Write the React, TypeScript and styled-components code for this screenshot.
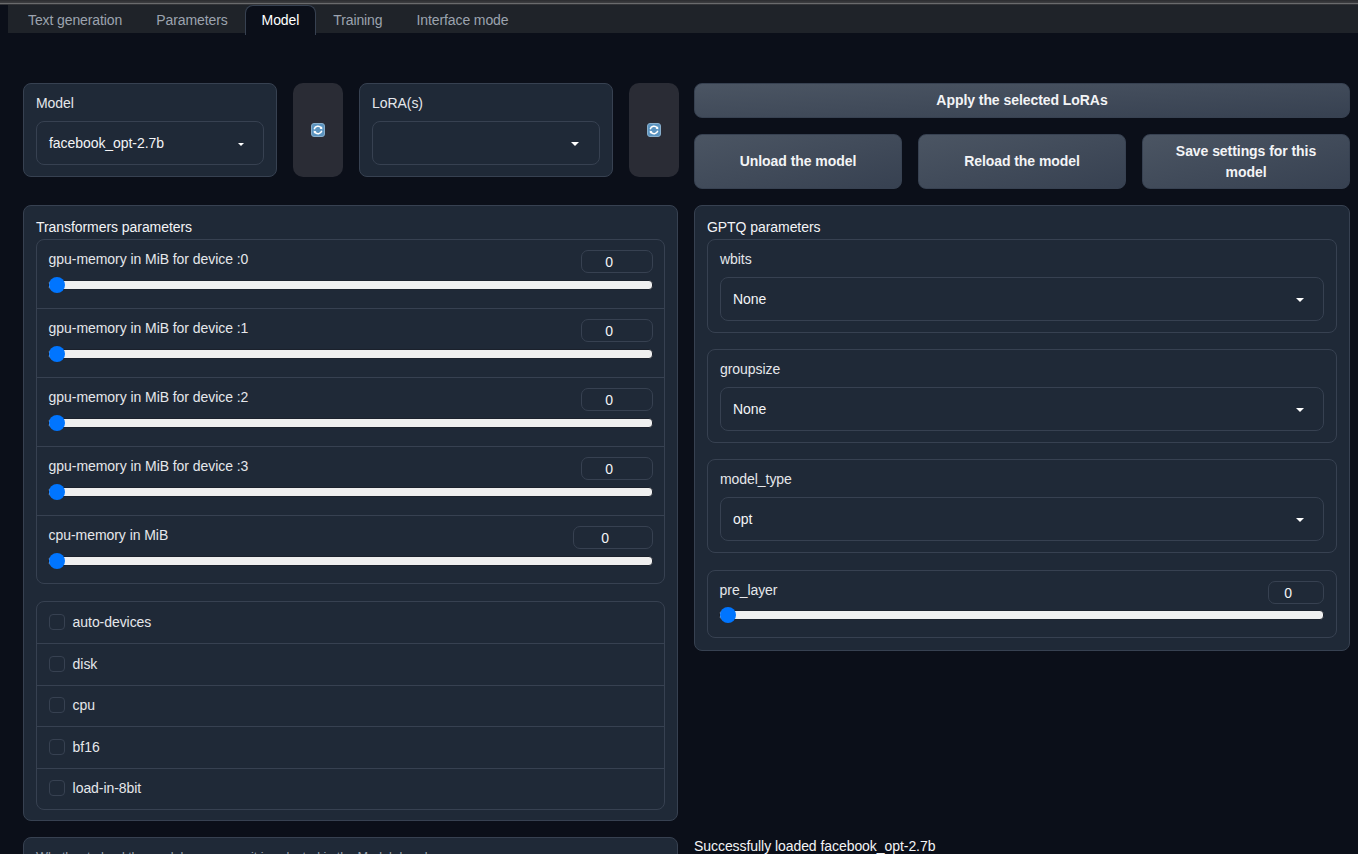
import React from "react";
import styled, { createGlobalStyle } from "styled-components";

const Global = createGlobalStyle`
  html, body { margin: 0; padding: 0; height: 854px; overflow: hidden; background: #0b0f19; }
  body { font-family: "Liberation Sans", Arial, sans-serif; font-size: 14px; color: #e5e7eb; letter-spacing: -0.06px; }
  * { box-sizing: border-box; }
`;

const Page = styled.div`display: flex; flex-direction: column; height: 854px; overflow: hidden;`;
const TopStrip = styled.div`height: 5px; flex: none; background: linear-gradient(#2b2c30 0, #3a3b3e 50%, #6a6b6d 70%, #16181d 100%);`;
const TabBar = styled.div`
  height: 28px; flex: none; margin-left: 8px; background: #1f2329; display: flex; padding-left: 3px;
`;
const Tab = styled.div<{ $active?: boolean }>`
  height: ${p => (p.$active ? "30px" : "28px")};
  padding: ${p => (p.$active ? "0 16px 1px" : "1px 16px 0")}; display: flex; align-items: center; font-size: 14px; letter-spacing: -0.1px;
  color: ${p => (p.$active ? "#fff" : "#9ca3af")};
  background: ${p => (p.$active ? "#0b0f19" : "transparent")};
  border: 1px solid ${p => (p.$active ? "#374151" : "transparent")};
  border-bottom: none; border-radius: 8px 8px 0 0;
  position: relative;
`;
const Content = styled.div`
  flex: 1; padding: 50px 8px 0 23px; display: grid;
  grid-template-columns: 655px 656px; column-gap: 16px; align-content: start; row-gap: 16px;
`;
const TopLeft = styled.div`
  display: grid; grid-template-columns: 254px 50px 254px 50px; grid-template-rows: 94px; column-gap: 16px; height: 94px;
`;
const Block = styled.div`
  background: #1f2937; border: 1px solid #374151; border-radius: 8px; padding: 12px;
`;
const PickerBlock = styled(Block)`padding-top: 11px;`;
const Label = styled.div`color: #e5e7eb; line-height: 16px; font-size: 14px;`;
const BlockTitle = styled(Label)`color: #f3f4f6; margin-top: 1px; margin-bottom: 4px;`;
const Select = styled.div<{ $small?: boolean }>`
  margin-top: 10px; height: 44px; background: #1f2937; border: 1px solid #374151; border-radius: 8px;
  display: flex; align-items: center; justify-content: space-between; padding: 0 ${p => (p.$small ? "19px" : "20px")} 0 12px;
  color: #f3f4f6; font-size: 14px;
`;
const Caret = styled.span<{ $small?: boolean }>`
  width: 0; height: 0; border-style: solid;
  border-width: ${p => (p.$small ? "3px 3px 0 3px" : "4px 4px 0 4px")};
  border-color: #fff transparent transparent transparent;
  margin-top: 2px;
`;
const RefreshBtn = styled.div`
  background: #2a2c35; border-radius: 10px; display: flex; align-items: center; justify-content: center; padding-bottom: 1px;
`;
const Buttons = styled.div`display: flex; flex-direction: column; gap: 16px;`;
const Btn = styled.div`
  flex: 1; min-width: 0; border: 1px solid #374151; border-radius: 8px;
  background: linear-gradient(to bottom right, #4b5563, #374151);
  display: flex; align-items: center; justify-content: center; text-align: center;
  color: #f3f4f6; font-weight: 700; font-size: 14px; line-height: 21px; padding: 0 28px;
`;
const WideBtn = styled(Btn)`flex: none; height: 35px;`;
const BtnRow = styled.div`display: grid; grid-template-columns: repeat(3, 208px); column-gap: 16px; height: 55px;`;
const Group = styled.div<{ $mt?: number }>`
  border: 1px solid #374151; border-radius: 8px; overflow: hidden; margin-top: ${p => p.$mt ?? 0}px;
`;
const SliderRow = styled.div`
  height: 69px; padding: 10px 11px 0 12px; border-top: 1px solid #374151;
  &:first-child { border-top: none; height: 68px; }
  &:last-child { height: 68px; }
`;
const SliderHead = styled.div`display: flex; justify-content: space-between; align-items: flex-start; height: 24px;`;
const RowLabel = styled(Label)`padding-top: 1px; margin-left: -0.4px;`;
const NumberBox = styled.div<{ $w: number }>`
  width: ${p => p.$w}px; height: 23px; border: 1px solid #374151; border-radius: 7px; padding-right: 16px;
  display: flex; align-items: center; justify-content: center; color: #f3f4f6; font-size: 14px;
`;
const Range = styled.input`
  -webkit-appearance: none; appearance: none; display: block; width: calc(100% + 1px); height: 16px; margin: 3px 0 0 -1px; background: transparent;
  &::-webkit-slider-runnable-track {
    height: 10px; background: #efefef; border-radius: 4px; border: 1px solid #1b212c;
  }
  &::-webkit-slider-thumb {
    -webkit-appearance: none; width: 16px; height: 16px; border-radius: 50%; background: #0075ff; margin-top: -4px;
  }
`;
const CheckList = styled(Group)`margin-top: 17px;`;
const CheckRow = styled.div`
  height: 41.4px; display: flex; align-items: center; padding: 0 0 1px 12px; gap: 8px; border-top: 1px solid #374151;
  &:first-child { border-top: none; }
`;
const CheckBox = styled.span`
  width: 16px; height: 16px; border: 1px solid #374151; border-radius: 4px; background: #1f2937; flex: none; margin-left: -0.4px;
`;
const CheckLabel = styled.span`color: #e5e7eb; font-size: 14px;`;
const SelectGroup = styled(Group)`padding: 11px 12px 12px; height: 94px; margin-bottom: 16px;`;
const PreLayer = styled(Group)`height: 68px; margin-top: 17px; padding: 10px 12px 0;`;
const PreLayerRange = styled(Range)`margin-top: 2px;`;
const Status = styled.div`color: #f3f4f6; font-size: 14px; line-height: 20px; margin-top: -1px;`;
const Hint = styled(Block)`height: 60px; padding: 11px 12px; color: #9ca3af; font-size: 12.7px; line-height: 16px;`;
const Transformers = styled(Block)`height: 616px;`;
const Gptq = styled(Block)`height: 446px;`;
const GptqInner = styled.div`display: flex; flex-direction: column;`;
const SelectStack = styled.div`display: flex; flex-direction: column; & > :last-child { margin-bottom: 0; }`;
const RightCol = styled.div``;

const RefreshIcon = () => (
  <svg width="14" height="14" viewBox="0 0 14 14" aria-hidden="true">
    <rect x="0.5" y="0.5" width="13" height="13" rx="2.5" fill="#5a93bf" stroke="#88aecb" strokeWidth="1" />
    <g fill="none" stroke="#fff" strokeWidth="1.5">
      <path d="M3.2 6.2 A3.9 3.9 0 0 1 10.2 5" />
      <path d="M10.8 7.8 A3.9 3.9 0 0 1 3.8 9" />
    </g>
    <path d="M8.6 5.7 L11.4 6.2 L11 3.3 Z" fill="#fff" />
    <path d="M5.4 8.3 L2.6 7.8 L3 10.7 Z" fill="#fff" />
  </svg>
);

const sliders: [string, number][] = [
  ["gpu-memory in MiB for device :0", 72],
  ["gpu-memory in MiB for device :1", 72],
  ["gpu-memory in MiB for device :2", 72],
  ["gpu-memory in MiB for device :3", 72],
  ["cpu-memory in MiB", 80],
];
const checks = ["auto-devices", "disk", "cpu", "bf16", "load-in-8bit"];
const selects: [string, string][] = [["wbits", "None"], ["groupsize", "None"], ["model_type", "opt"]];

export default function App() {
  return (
    <Page>
      <Global />
      <TopStrip />
      <TabBar>
        <Tab>Text generation</Tab>
        <Tab>Parameters</Tab>
        <Tab $active>Model</Tab>
        <Tab>Training</Tab>
        <Tab>Interface mode</Tab>
      </TabBar>
      <Content>
        <TopLeft>
          <PickerBlock>
            <Label>Model</Label>
            <Select $small>facebook_opt-2.7b<Caret $small /></Select>
          </PickerBlock>
          <RefreshBtn><RefreshIcon /></RefreshBtn>
          <PickerBlock>
            <Label>LoRA(s)</Label>
            <Select><span /><Caret /></Select>
          </PickerBlock>
          <RefreshBtn><RefreshIcon /></RefreshBtn>
        </TopLeft>
        <Buttons>
          <WideBtn>Apply the selected LoRAs</WideBtn>
          <BtnRow>
            <Btn>Unload the model</Btn>
            <Btn>Reload the model</Btn>
            <Btn>Save settings for this model</Btn>
          </BtnRow>
        </Buttons>
        <Transformers>
          <BlockTitle>Transformers parameters</BlockTitle>
          <Group>
            {sliders.map(([label, w]) => (
              <SliderRow key={label}>
                <SliderHead>
                  <RowLabel>{label}</RowLabel>
                  <NumberBox $w={w}>0</NumberBox>
                </SliderHead>
                <Range type="range" min={0} max={100} defaultValue={0} />
              </SliderRow>
            ))}
          </Group>
          <CheckList>
            {checks.map(c => (
              <CheckRow key={c}><CheckBox /><CheckLabel>{c}</CheckLabel></CheckRow>
            ))}
          </CheckList>
        </Transformers>
        <RightCol>
          <Gptq>
            <BlockTitle>GPTQ parameters</BlockTitle>
            <GptqInner>
              <SelectStack>
                {selects.map(([l, v]) => (
                  <SelectGroup key={l}>
                    <Label>{l}</Label>
                    <Select $small>{v}<Caret /></Select>
                  </SelectGroup>
                ))}
              </SelectStack>
              <PreLayer>
                <SliderHead>
                  <RowLabel>pre_layer</RowLabel>
                  <NumberBox $w={56}>0</NumberBox>
                </SliderHead>
                <PreLayerRange type="range" min={0} max={100} defaultValue={0} />
              </PreLayer>
            </GptqInner>
          </Gptq>
        </RightCol>
        <Hint>Whether to load the model as soon as it is selected in the Model dropdown.</Hint>
        <Status>Successfully loaded facebook_opt-2.7b</Status>
      </Content>
    </Page>
  );
}
